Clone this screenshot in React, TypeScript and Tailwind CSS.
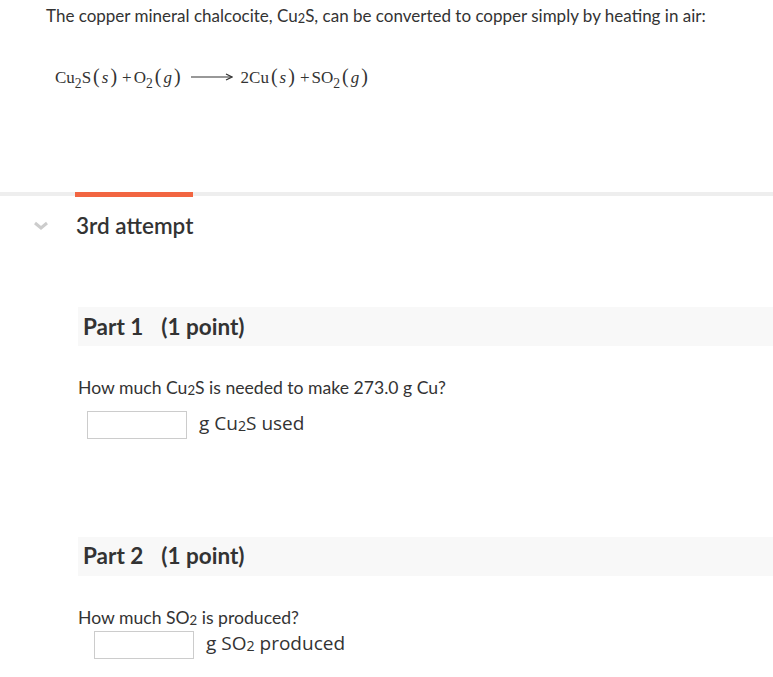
import React from "react";

const lato = { fontFamily: "Lato, 'Noto Sans', sans-serif" };

function Sub({ children }: { children: React.ReactNode }) {
  return <sub className="text-[0.75em] relative top-[0.1em] align-baseline">{children}</sub>;
}

function MSub({ children }: { children: React.ReactNode }) {
  return <sub className="text-[0.8em] relative top-[0.35em] align-baseline">{children}</sub>;
}

function Paren({ c }: { c: string }) {
  return <span className="text-[20px] mx-[2px] relative top-[-0.5px]">{c}</span>;
}

function State({ s }: { s: string }) {
  return (
    <>
      <Paren c="(" />
      <i className="italic">{s}</i>
      <Paren c=")" />
    </>
  );
}

function Plus() {
  return <span className="ml-[3px] mr-[2px]">+</span>;
}

function PartHeader({ n }: { n: number }) {
  return (
    <div className="ml-[78px] h-[39px] bg-[#f8f8f8] flex items-center pl-[5px] text-[22.5px] font-bold text-[#333]">
      <span>Part {n}</span>
      <span className="ml-[18px]">(1 point)</span>
    </div>
  );
}

function Answer({ indent, label }: { indent: string; label: React.ReactNode }) {
  return (
    <div className={`flex items-center ${indent}`}>
      <input className="w-[100px] h-[28px] border border-[#ccc] bg-white outline-none" />
      <span className="ml-[12px] text-[19px] text-[#333] font-['Open_Sans',sans-serif] relative top-[-2px]">
        {label}
      </span>
    </div>
  );
}

export default function App() {
  return (
    <div className="w-[773px] h-[677px] bg-white text-[#333] overflow-hidden" style={lato}>
      <p className="pl-[46px] pt-[4px] text-[17px] leading-[24px]">
        The copper mineral chalcocite, Cu<Sub>2</Sub>S, can be converted to copper simply by heating in air:
      </p>
      <div className="pl-[55px] mt-[36px] text-[17px] text-[#333] font-['Liberation_Serif',serif] flex items-center h-[24px] whitespace-nowrap">
        <span>
          Cu<MSub>2</MSub>S<State s="s" />
          <Plus />O<MSub>2</MSub>
          <State s="g" />
        </span>
        <svg width="42" height="10" viewBox="0 0 42 10" className="mx-[8px] mt-[2px]">
          <path d="M0 5 H40" stroke="#333" strokeWidth="1.2" />
          <path d="M35 2 L41 5 L35 8" stroke="#333" strokeWidth="1.2" fill="none" />
        </svg>
        <span>
          2Cu<State s="s" />
          <Plus />SO<MSub>2</MSub>
          <State s="g" />
        </span>
      </div>

      <div className="mt-[104px] h-[4px] bg-[#eeeeee] relative">
        <div className="absolute left-[75px] top-0 w-[118px] h-[5px] bg-[#f26541]" />
      </div>

      <div className="flex items-center mt-[18px] h-[24px]">
        <svg width="16" height="10" viewBox="0 0 16 10" className="ml-[33px]">
          <path d="M2 2 L8 7 L14 2" stroke="#cccccc" strokeWidth="3" fill="none" />
        </svg>
        <span className="ml-[27px] text-[22.5px] font-semibold text-[#333]">3rd attempt</span>
      </div>

      <div className="mt-[69px]">
        <PartHeader n={1} />
      </div>
      <p className="pl-[78px] mt-[30px] text-[17.6px] leading-[24px]">
        How much Cu<Sub>2</Sub>S is needed to make 273.0 g Cu?
      </p>
      <div className="mt-[11px]">
        <Answer indent="pl-[87px]" label={<>g Cu<Sub>2</Sub>S used</>} />
      </div>

      <div className="mt-[97px]">
        <PartHeader n={2} />
      </div>
      <p className="pl-[78px] mt-[30px] text-[17.6px] leading-[24px]">
        How much SO<Sub>2</Sub> is produced?
      </p>
      <div className="mt-[1px]">
        <Answer indent="pl-[94px]" label={<>g SO<Sub>2</Sub> produced</>} />
      </div>
    </div>
  );
}
